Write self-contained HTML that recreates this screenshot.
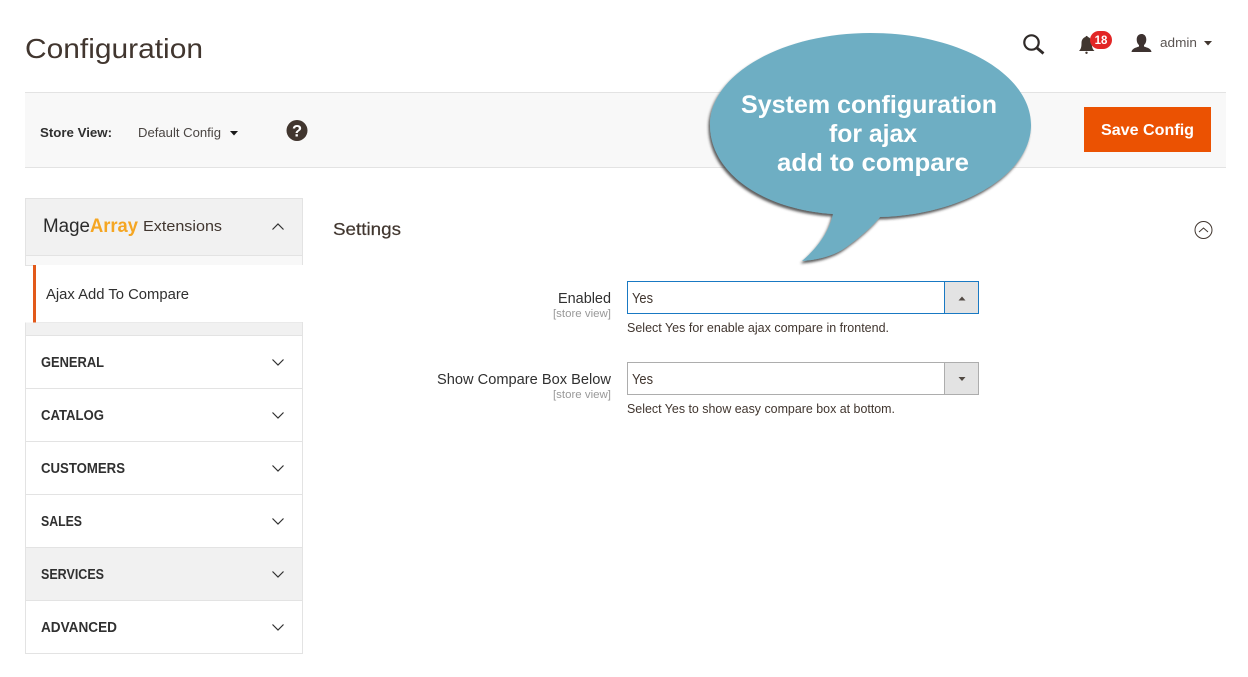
<!DOCTYPE html>
<html><head><meta charset="utf-8"><title>Configuration</title>
<style>
html,body{margin:0;padding:0;background:#fff;width:1248px;height:677px;overflow:hidden}
svg{display:block}
text{font-family:"Liberation Sans",sans-serif;fill:#303030}
.b{font-weight:bold}
.h{font-weight:bold;font-size:14.5px;fill:#303030}
.s{font-size:11px;fill:#999}
.n{font-size:12.5px;fill:#41362f}
</style></head><body>
<svg width="1248" height="677" viewBox="0 0 1248 677" xmlns="http://www.w3.org/2000/svg">
<defs><filter id="sh" x="-10%" y="-10%" width="120%" height="125%"><feDropShadow dx="-1.500" dy="2.500" stdDeviation="1.300" flood-color="#2a2a2a" flood-opacity=".75"/></filter></defs>
<rect width="1248" height="677" fill="#fff"/>
<text x="25" y="58" font-size="28" style="fill:#41362f" textLength="178" lengthAdjust="spacingAndGlyphs">Configuration</text>

<!-- header icons -->
<circle cx="1031.500" cy="42.500" r="7.200" fill="none" stroke="#2f2a28" stroke-width="2.200"/>
<path d="M1037 48L1043.500 53.500" stroke="#2f2a28" stroke-width="2.800" fill="none"/>
<path d="M1079 51c2-2 2.500-4 2.500-8 0-3.500 2-5.500 4-6 .3-1.500 2-1.500 2.300 0 2 .5 4 2.500 4 6 0 4 .7 6 2.700 8z" fill="#41362f"/>
<circle cx="1086.500" cy="52.800" r="1.200" fill="#41362f"/>
<rect x="1090" y="31" width="22" height="18" rx="9" fill="#e22626"/>
<text x="1101" y="44" text-anchor="middle" class="b" font-size="11.500" style="fill:#fff">18</text>
<path d="M1141.500 34c3.200 0 4.800 2.500 4.800 5.500 0 2.500-1 4.500-2.300 5.500v1.500c3 1.200 7 1.800 7.500 5.500h-20c.5-3.700 4.500-4.300 7.500-5.500V45c-1.300-1-2.300-3-2.300-5.500 0-3 1.600-5.500 4.800-5.500z" fill="#3d3230"/>
<text x="1160" y="47" font-size="13" style="fill:#5a5452" textLength="37" lengthAdjust="spacingAndGlyphs">admin</text>
<path d="M1204 41h8l-4 4.500z" fill="#41362f"/>

<!-- store bar -->
<rect x="25" y="92.500" width="1201" height="75" fill="#f8f8f8"/>
<path d="M25 92.500H1226M25 167.500H1226" stroke="#e3e3e3" fill="none"/>
<text x="40" y="137" class="b" font-size="13" textLength="72" lengthAdjust="spacingAndGlyphs">Store View:</text>
<text x="138" y="137" font-size="13" style="fill:#4a4542" textLength="83" lengthAdjust="spacingAndGlyphs">Default Config</text>
<path d="M230 131h8l-4 4.500z" fill="#1a1a1a"/>
<circle cx="297" cy="130.500" r="10.500" fill="#41362f"/>
<text x="297" y="136.500" text-anchor="middle" class="b" font-size="16.500" style="fill:#fff">?</text>
<rect x="1084" y="107" width="127" height="45" fill="#eb5202"/>
<text x="1101" y="135" class="b" font-size="16" style="fill:#fff" textLength="93" lengthAdjust="spacingAndGlyphs">Save Config</text>

<!-- sidebar -->
<rect x="25.500" y="198.500" width="277" height="57" fill="#f1f1f1" stroke="#e3e3e3"/>
<rect x="25.500" y="255.500" width="277" height="10" fill="#f8f8f8" stroke="#e3e3e3"/>
<text x="43" y="232" font-size="19" style="fill:#2b2b2b" textLength="47" lengthAdjust="spacingAndGlyphs">Mage</text>
<text x="90" y="232" font-size="19" class="b" style="fill:#f5a623" textLength="48" lengthAdjust="spacingAndGlyphs">Array</text>
<text x="143" y="231" font-size="15" style="fill:#41362f" textLength="79" lengthAdjust="spacingAndGlyphs">Extensions</text>
<path d="M272.500 229.500L278 224l5.500 5.500" fill="none" stroke="#303030" stroke-width="1.200"/>
<rect x="33" y="265" width="270" height="57.500" fill="#fff"/>
<path d="M36 322.500H303" stroke="#e3e3e3"/>
<rect x="33" y="265" width="3" height="58" fill="#e2591a"/>
<text x="46" y="299" font-size="14.500" textLength="143" lengthAdjust="spacingAndGlyphs">Ajax Add To Compare</text>
<rect x="25.500" y="322.500" width="277" height="12.500" fill="#f1f1f1"/>
<path d="M25.500 322.500V335" stroke="#e3e3e3"/>
<rect x="25.500" y="547.500" width="277" height="53" fill="#f1f1f1"/>
<path d="M25.500 335V653.500H302.500V322" fill="none" stroke="#e3e3e3"/>
<path d="M25 335.500H303M25 388.500H303M25 441.500H303M25 494.500H303M25 547.500H303M25 600.500H303" stroke="#e3e3e3"/>
<text x="41" y="367" class="h" textLength="63" lengthAdjust="spacingAndGlyphs">GENERAL</text>
<text x="41" y="420" class="h" textLength="63" lengthAdjust="spacingAndGlyphs">CATALOG</text>
<text x="41" y="473" class="h" textLength="84" lengthAdjust="spacingAndGlyphs">CUSTOMERS</text>
<text x="41" y="526" class="h" textLength="41" lengthAdjust="spacingAndGlyphs">SALES</text>
<text x="41" y="579" class="h" textLength="63" lengthAdjust="spacingAndGlyphs">SERVICES</text>
<text x="41" y="632" class="h" textLength="76" lengthAdjust="spacingAndGlyphs">ADVANCED</text>
<g fill="none" stroke="#303030" stroke-width="1.200">
<path d="M272.500 359.500L278 365l5.500-5.500"/>
<path d="M272.500 412.500L278 418l5.500-5.500"/>
<path d="M272.500 465.500L278 471l5.500-5.500"/>
<path d="M272.500 518.500L278 524l5.500-5.500"/>
<path d="M272.500 571.500L278 577l5.500-5.500"/>
<path d="M272.500 624.500L278 630l5.500-5.500"/>
</g>

<!-- settings -->
<text x="333" y="235" font-size="17.500" style="fill:#41362f" stroke="#41362f" stroke-width=".2" textLength="68" lengthAdjust="spacingAndGlyphs">Settings</text>
<circle cx="1203.500" cy="230" r="8.500" fill="none" stroke="#41362f" stroke-width="1"/>
<path d="M1199 232l4.500-4 4.500 4" fill="none" stroke="#41362f" stroke-width="1"/>

<text x="558" y="303" font-size="14.500" textLength="53" lengthAdjust="spacingAndGlyphs">Enabled</text>
<text x="553" y="317" class="s" textLength="58" lengthAdjust="spacingAndGlyphs">[store view]</text>
<rect x="627.500" y="281.500" width="351" height="32" fill="#fff" stroke="#1979c3"/>
<rect x="945" y="282" width="33" height="31" fill="#e3e3e3"/>
<path d="M944.500 282V313" stroke="#1979c3"/>
<path d="M958.500 300.500l3.500-4 3.500 4z" fill="#514943"/>
<text x="632" y="303" font-size="14.500" style="fill:#41362f" textLength="21" lengthAdjust="spacingAndGlyphs">Yes</text>
<text x="627" y="332" class="n" textLength="262" lengthAdjust="spacingAndGlyphs">Select Yes for enable ajax compare in frontend.</text>

<text x="437" y="384" font-size="14.500" textLength="174" lengthAdjust="spacingAndGlyphs">Show Compare Box Below</text>
<text x="553" y="398" class="s" textLength="58" lengthAdjust="spacingAndGlyphs">[store view]</text>
<rect x="627.500" y="362.500" width="351" height="32" fill="#fff" stroke="#adadad"/>
<rect x="945" y="363" width="33" height="31" fill="#e3e3e3"/>
<path d="M944.500 363V394" stroke="#adadad"/>
<path d="M958.500 377l3.500 4 3.500-4z" fill="#514943"/>
<text x="632" y="384" font-size="14.500" style="fill:#41362f" textLength="21" lengthAdjust="spacingAndGlyphs">Yes</text>
<text x="627" y="413" class="n" textLength="268" lengthAdjust="spacingAndGlyphs">Select Yes to show easy compare box at bottom.</text>

<!-- bubble -->
<path filter="url(#sh)" fill="#6eaec3" d="M870.500 33C959 33 1031 74 1031 125c0 50-70 90-151 92-6 8-24 24-38 33-12 7-26 10-40 11 14-12 27-28 31-47C760 209 710 171 710 125 710 74 782 33 870.500 33z"/>
<text x="869" y="113" text-anchor="middle" class="b" font-size="25" style="fill:#fff" textLength="256" lengthAdjust="spacingAndGlyphs">System configuration</text>
<text x="873" y="142" text-anchor="middle" class="b" font-size="25" style="fill:#fff" textLength="88" lengthAdjust="spacingAndGlyphs">for ajax</text>
<text x="873" y="171" text-anchor="middle" class="b" font-size="25" style="fill:#fff" textLength="192" lengthAdjust="spacingAndGlyphs">add to compare</text>
</svg>
</body></html>
